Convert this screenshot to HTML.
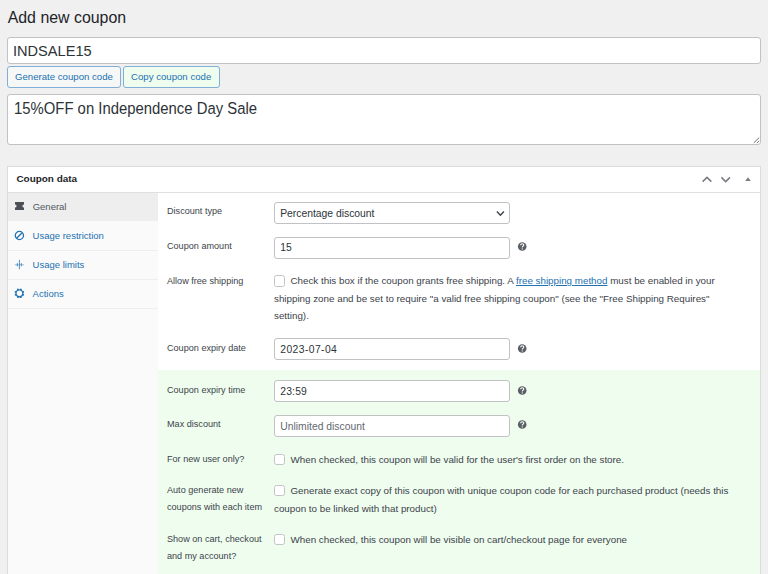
<!DOCTYPE html>
<html><head><meta charset="utf-8">
<style>
*{box-sizing:border-box;margin:0;padding:0}
html,body{width:768px;height:574px;overflow:hidden;background:#f0f0f1;font-family:"Liberation Sans",sans-serif;color:#3c434a}
.a{position:absolute;white-space:nowrap;line-height:1}
.inp{position:absolute;background:#fff;border:1px solid #c0c2c5;border-radius:3px}
.btn{position:absolute;border:1px solid #80aed6;border-radius:3px;background:#f6f7f7}
.bt{position:absolute;white-space:nowrap;line-height:1;font-size:9.63px;color:#2271b1}
.lbl{font-size:9.1px;color:#3c434a}
.desc{font-size:9.8px;color:#3c434a}
.it{font-size:10.35px;color:#2c3338}
.side{font-size:9.5px;color:#2271b1}
.cb{position:absolute;width:11px;height:11px;border:1px solid #c3c4c7;border-radius:2.5px;background:#fff}
.ic{position:absolute;overflow:visible}
</style></head><body>
<div class="a" style="left:7.7px;top:10px;font-size:15.9px;color:#1d2327">Add new coupon</div>

<div class="inp" style="left:7px;top:37px;width:754px;height:27px"></div>
<div class="a" style="left:13.1px;top:43px;font-size:15.3px;color:#2c3338;transform:scaleX(0.953);transform-origin:0 0">INDSALE15</div>

<div class="btn" style="left:7px;top:66px;width:114px;height:22px"></div>
<div class="bt" style="left:15px;top:72px">Generate coupon code</div>
<div class="btn" style="left:123px;top:66px;width:97px;height:22px;background:#effdef"></div>
<div class="bt" style="left:131px;top:72px">Copy coupon code</div>

<div class="inp" style="left:7px;top:94px;width:754px;height:51px"></div>
<div class="a" style="left:13.5px;top:101px;font-size:16.7px;color:#2c3338;transform:scaleX(0.891);transform-origin:0 0">15%OFF on Independence Day Sale</div>
<svg class="ic" style="left:750px;top:135px" width="10" height="9" viewBox="0 0 10 9"><path d="M3.8 7.8 L9.2 2.6 M6.9 8 L9.2 5.8" stroke="#6b7075" stroke-width="1" fill="none"/></svg>

<!-- coupon data box -->
<div style="position:absolute;left:7px;top:166px;width:754px;height:420px;background:#fff;border:1px solid #dcdcde"></div>
<div style="position:absolute;left:8px;top:192px;width:752px;height:1px;background:#e0e0e2"></div>
<div class="a" style="left:16.4px;top:174px;font-size:9.95px;font-weight:700;color:#1d2327">Coupon data</div>
<svg class="ic" style="left:700px;top:174px" width="54" height="10" viewBox="0 0 54 10">
<path d="M2.6 7.6 L7 3.4 L11.4 7.6" stroke="#787c82" stroke-width="1.5" fill="none"/>
<path d="M21.4 3.4 L25.7 7.6 L30 3.4" stroke="#787c82" stroke-width="1.5" fill="none"/>
<path d="M45.2 7 L48 3.2 L50.8 7 Z" fill="#787c82"/>
</svg>

<!-- sidebar -->
<div style="position:absolute;left:8px;top:193px;width:150px;height:400px;background:#fafafa"></div>
<div style="position:absolute;left:8px;top:193px;width:150px;height:28px;background:#eeeeee"></div>
<div style="position:absolute;left:8px;top:250px;width:150px;height:1px;background:#eeeeee"></div>
<div style="position:absolute;left:8px;top:279px;width:150px;height:1px;background:#eeeeee"></div>
<div style="position:absolute;left:8px;top:308px;width:150px;height:1px;background:#eeeeee"></div>

<svg class="ic" style="left:14px;top:201px" width="11" height="10" viewBox="0 0 11 10"><path d="M1 1 H10 V3.4 A1.6 1.6 0 0 0 10 6.6 V9 H1 V6.6 A1.6 1.6 0 0 0 1 3.4 Z" fill="#4a5056"/></svg>
<div class="a side" style="left:32.7px;top:201.6px;color:#50575e">General</div>

<svg class="ic" style="left:14px;top:229.5px" width="11" height="11" viewBox="0 0 11 11"><circle cx="5.4" cy="5.5" r="4.1" stroke="#2271b1" stroke-width="1.3" fill="none"/><path d="M8.2 2.7 L2.6 8.3" stroke="#2271b1" stroke-width="1.3"/></svg>
<div class="a side" style="left:32.6px;top:230.9px">Usage restriction</div>

<svg class="ic" style="left:14px;top:258.5px" width="11" height="11" viewBox="0 0 11 11"><path d="M0.8 5.8 H10" stroke="#2271b1" stroke-width="0.6" opacity="0.7"/><path d="M5.4 0.8 V10.3" stroke="#2271b1" stroke-width="0.9" opacity="0.85"/><path d="M3.3 4.2 V7.3 M7.3 4.2 V7.3" stroke="#2271b1" stroke-width="1" opacity="0.8"/></svg>
<div class="a side" style="left:32.6px;top:259.9px">Usage limits</div>

<svg class="ic" style="left:14px;top:288px" width="11" height="11" viewBox="0 0 11 11"><circle cx="5.4" cy="5.3" r="3.45" stroke="#2271b1" stroke-width="1.35" fill="none"/><g fill="#2271b1"><circle cx="3.90" cy="1.40" r="0.85"/><circle cx="6.90" cy="1.40" r="0.85"/><circle cx="3.90" cy="9.20" r="0.85"/><circle cx="6.90" cy="9.20" r="0.85"/><circle cx="1.50" cy="3.80" r="0.85"/><circle cx="1.50" cy="6.80" r="0.85"/><circle cx="9.30" cy="3.80" r="0.85"/><circle cx="9.30" cy="6.80" r="0.85"/></g></svg>
<div class="a side" style="left:32.6px;top:289px">Actions</div>

<!-- green region -->
<div style="position:absolute;left:158px;top:370px;width:602px;height:210px;background:#effdef"></div>

<!-- rows -->
<div class="a lbl" style="left:167px;top:207px">Discount type</div>
<div class="inp" style="left:274px;top:202px;width:236px;height:22px"></div>
<div class="a it" style="left:280.2px;top:209px">Percentage discount</div>
<svg class="ic" style="left:495px;top:209px" width="11" height="9" viewBox="0 0 11 9"><path d="M1.9 2.6 L5.4 6.2 L8.9 2.6" stroke="#3c434a" stroke-width="1.4" fill="none"/></svg>

<div class="a lbl" style="left:167px;top:242px">Coupon amount</div>
<div class="inp" style="left:274px;top:237px;width:236px;height:22px"></div>
<div class="a it" style="left:280.2px;top:243px">15</div>

<div class="a lbl" style="left:167px;top:277px">Allow free shipping</div>
<div class="cb" style="left:274px;top:275px;height:11.6px"></div>
<div class="a desc" style="left:290.5px;top:275.9px">Check this box if the coupon grants free shipping. A <span style="color:#2271b1;text-decoration:underline">free shipping method</span> must be enabled in your</div>
<div class="a desc" style="left:274px;top:294.2px">shipping zone and be set to require "a valid free shipping coupon" (see the "Free Shipping Requires"</div>
<div class="a desc" style="left:274px;top:311.1px">setting).</div>

<div class="a lbl" style="left:167px;top:344px">Coupon expiry date</div>
<div class="inp" style="left:274px;top:338px;width:236px;height:22px"></div>
<div class="a it" style="left:280.3px;top:345px;letter-spacing:0.4px">2023-07-04</div>

<div class="a lbl" style="left:167px;top:386px">Coupon expiry time</div>
<div class="inp" style="left:274px;top:380px;width:236px;height:22px"></div>
<div class="a it" style="left:280.3px;top:387px;letter-spacing:0.15px">23:59</div>

<div class="a lbl" style="left:167px;top:420px">Max discount</div>
<div class="inp" style="left:274px;top:415px;width:236px;height:22px"></div>
<div class="a it" style="left:280.3px;top:422px;letter-spacing:0px;color:#646970">Unlimited discount</div>

<div class="a lbl" style="left:167px;top:455px">For new user only?</div>
<div class="cb" style="left:274px;top:453.5px"></div>
<div class="a desc" style="left:290.5px;top:455px">When checked, this coupon will be valid for the user's first order on the store.</div>

<div class="a lbl" style="left:167px;top:486px">Auto generate new</div>
<div class="a lbl" style="left:167px;top:503px">coupons with each item</div>
<div class="cb" style="left:274px;top:485px"></div>
<div class="a desc" style="left:290.5px;top:486px">Generate exact copy of this coupon with unique coupon code for each purchased product (needs this</div>
<div class="a desc" style="left:274px;top:503.6px">coupon to be linked with that product)</div>

<div class="a lbl" style="left:167px;top:535px">Show on cart, checkout</div>
<div class="a lbl" style="left:167px;top:552px">and my account?</div>
<div class="cb" style="left:274px;top:534px"></div>
<div class="a desc" style="left:290.5px;top:534.6px">When checked, this coupon will be visible on cart/checkout page for everyone</div>

<!-- help icons -->
<svg class="ic" style="left:517px;top:241px" width="11" height="11" viewBox="0 0 11 11"><circle cx="5.2" cy="5.5" r="4.3" fill="#5a5f64"/><path d="M3.7 4.3 Q3.7 2.7 5.2 2.7 Q6.8 2.7 6.8 4.1 Q6.8 4.9 5.9 5.3 Q5.25 5.6 5.25 6.4" stroke="#fff" stroke-width="1.1" fill="none"/><circle cx="5.25" cy="7.9" r="0.65" fill="#fff"/></svg>
<svg class="ic" style="left:517px;top:342.5px" width="11" height="11" viewBox="0 0 11 11"><circle cx="5.2" cy="5.5" r="4.3" fill="#5a5f64"/><path d="M3.7 4.3 Q3.7 2.7 5.2 2.7 Q6.8 2.7 6.8 4.1 Q6.8 4.9 5.9 5.3 Q5.25 5.6 5.25 6.4" stroke="#fff" stroke-width="1.1" fill="none"/><circle cx="5.25" cy="7.9" r="0.65" fill="#fff"/></svg>
<svg class="ic" style="left:517px;top:384.5px" width="11" height="11" viewBox="0 0 11 11"><circle cx="5.2" cy="5.5" r="4.3" fill="#5a5f64"/><path d="M3.7 4.3 Q3.7 2.7 5.2 2.7 Q6.8 2.7 6.8 4.1 Q6.8 4.9 5.9 5.3 Q5.25 5.6 5.25 6.4" stroke="#fff" stroke-width="1.1" fill="none"/><circle cx="5.25" cy="7.9" r="0.65" fill="#fff"/></svg>
<svg class="ic" style="left:517px;top:419px" width="11" height="11" viewBox="0 0 11 11"><circle cx="5.2" cy="5.5" r="4.3" fill="#5a5f64"/><path d="M3.7 4.3 Q3.7 2.7 5.2 2.7 Q6.8 2.7 6.8 4.1 Q6.8 4.9 5.9 5.3 Q5.25 5.6 5.25 6.4" stroke="#fff" stroke-width="1.1" fill="none"/><circle cx="5.25" cy="7.9" r="0.65" fill="#fff"/></svg>

</body></html>
